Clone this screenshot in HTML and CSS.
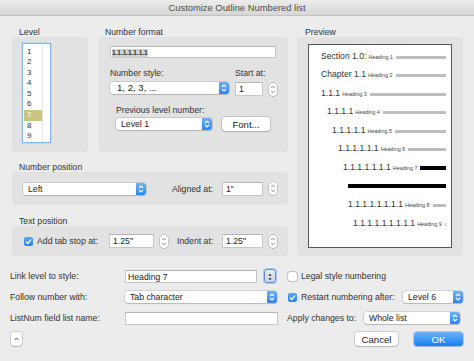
FILE: index.html
```html
<!DOCTYPE html>
<html>
<head>
<meta charset="utf-8">
<title>Customize Outline Numbered list</title>
<link rel="stylesheet" href="styles.css">
</head>
<body>
<div class="window">
  <div class="titlebar">Customize Outline Numbered list</div>

  <div class="top">
    <div class="left">
      <div class="pair">
        <div class="group">
          <div class="glabel">Level</div>
          <div class="box level-box">
            <div class="listbox">
              <ul class="items">
                <li>1</li><li>2</li><li>3</li><li>4</li><li>5</li><li>6</li><li class="sel">7</li><li>8</li><li>9</li>
              </ul>
            </div>
          </div>
        </div>

        <div class="group">
          <div class="glabel">Number format</div>
          <div class="box nf-box">
            <div class="field fmt-field"><span class="fmt-text">1.1.1.1.1.1.1</span></div>
            <div class="nf-row">
              <div class="style-col">
                <div class="flabel">Number style:</div>
                <div class="popup style-pop"><span class="ptext big">1, 2, 3, ...</span><span class="arrows"><svg width="10" height="12" viewBox="0 0 10 12"><path d="M3 5 L5 3 L7 5 M3 7 L5 9 L7 7" fill="none" stroke="#fff" stroke-width="1.2"/></svg></span></div>
              </div>
              <div class="start-col">
                <div class="flabel">Start at:</div>
                <div class="hstack">
                  <div class="field start-field">1</div>
                  <div class="stepper"><svg width="8" height="13" viewBox="0 0 8 13"><path d="M2.3 5 L4 3.3 L5.7 5 M2.3 8 L4 9.7 L5.7 8" fill="none" stroke="#7a7a7a" stroke-width="0.9"/></svg></div>
                </div>
              </div>
            </div>
            <div class="prev-block">
              <div class="flabel tight">Previous level number:</div>
              <div class="prev-row">
                <div class="popup prev-pop"><span class="ptext">Level 1</span><span class="arrows"><svg width="10" height="12" viewBox="0 0 10 12"><path d="M3 5 L5 3 L7 5 M3 7 L5 9 L7 7" fill="none" stroke="#fff" stroke-width="1.2"/></svg></span></div>
                <div class="btn font-btn">Font...</div>
              </div>
            </div>
          </div>
        </div>
      </div>

      <div class="group np-group">
        <div class="glabel">Number position</div>
        <div class="box np-box">
          <div class="popup np-pop"><span class="ptext">Left</span><span class="arrows"><svg width="10" height="12" viewBox="0 0 10 12"><path d="M3 5 L5 3 L7 5 M3 7 L5 9 L7 7" fill="none" stroke="#fff" stroke-width="1.2"/></svg></span></div>
          <div class="np-label">Aligned at:</div>
          <div class="field small-field">1"</div>
          <div class="stepper"><svg width="8" height="13" viewBox="0 0 8 13"><path d="M2.3 5 L4 3.3 L5.7 5 M2.3 8 L4 9.7 L5.7 8" fill="none" stroke="#7a7a7a" stroke-width="0.9"/></svg></div>
        </div>
      </div>

      <div class="group tp-group">
        <div class="glabel">Text position</div>
        <div class="box tp-box">
          <span class="check on"><svg width="9" height="9" viewBox="0 0 9 9"><path d="M2 4.6 L3.8 6.4 L7 2.6" fill="none" stroke="#fff" stroke-width="1.4"/></svg></span>
          <span class="tp-label1">Add tab stop at:</span>
          <div class="field tab-field">1.25"</div>
          <div class="stepper"><svg width="8" height="13" viewBox="0 0 8 13"><path d="M2.3 5 L4 3.3 L5.7 5 M2.3 8 L4 9.7 L5.7 8" fill="none" stroke="#7a7a7a" stroke-width="0.9"/></svg></div>
          <span class="tp-label2">Indent at:</span>
          <div class="field small-field">1.25"</div>
          <div class="stepper"><svg width="8" height="13" viewBox="0 0 8 13"><path d="M2.3 5 L4 3.3 L5.7 5 M2.3 8 L4 9.7 L5.7 8" fill="none" stroke="#7a7a7a" stroke-width="0.9"/></svg></div>
        </div>
      </div>
    </div>

    <div class="group preview">
      <div class="glabel pv-label">Preview</div>
      <div class="box pv-box">
        <div class="paper">
          <div class="prow i1"><span class="pnum">Section 1.0:</span><span class="phead">Heading 1</span><span class="pbar"></span></div>
          <div class="prow i1"><span class="pnum">Chapter 1.1</span><span class="phead">Heading 2</span><span class="pbar"></span></div>
          <div class="prow i1"><span class="pnum">1.1.1</span><span class="phead">Heading 3</span><span class="pbar"></span></div>
          <div class="prow i4"><span class="pnum">1.1.1.1</span><span class="phead">Heading 4</span><span class="pbar"></span></div>
          <div class="prow i5"><span class="pnum">1.1.1.1.1</span><span class="phead">Heading 5</span><span class="pbar"></span></div>
          <div class="prow i6"><span class="pnum">1.1.1.1.1.1</span><span class="phead">Heading 6</span><span class="pbar"></span></div>
          <div class="prow i7"><span class="pnum">1.1.1.1.1.1.1</span><span class="phead">Heading 7</span><span class="pbar dark"></span></div>
          <div class="prow i8 barrow"><span class="bigbar"></span></div>
          <div class="prow i8"><span class="pnum">1.1.1.1.1.1.1.1</span><span class="phead">Heading 8</span><span class="pbar"></span></div>
          <div class="prow i9"><span class="pnum">1.1.1.1.1.1.1.1.1</span><span class="phead">Heading 9</span><span class="pbar"></span></div>
        </div>
      </div>
    </div>
  </div>

  <div class="bottom">
    <div class="brow">
      <span class="blabel">Link level to style:</span>
      <div class="field link-field">Heading 7</div>
      <div class="link-stepper"><svg width="12" height="14" viewBox="0 0 12 14"><path d="M6 3 L8 5.6 L4 5.6 Z M6 11 L8 8.4 L4 8.4 Z" fill="#1f2a3a"/></svg></div>
      <span class="check off legal-check"></span>
      <span class="clabel">Legal style numbering</span>
    </div>
    <div class="brow">
      <span class="blabel">Follow number with:</span>
      <div class="popup follow-pop"><span class="ptext">Tab character</span><span class="arrows"><svg width="10" height="12" viewBox="0 0 10 12"><path d="M3 5 L5 3 L7 5 M3 7 L5 9 L7 7" fill="none" stroke="#fff" stroke-width="1.2"/></svg></span></div>
      <span class="check on restart-check"><svg width="9" height="9" viewBox="0 0 9 9"><path d="M2 4.6 L3.8 6.4 L7 2.6" fill="none" stroke="#fff" stroke-width="1.4"/></svg></span>
      <span class="clabel">Restart numbering after:</span>
      <div class="popup level6-pop"><span class="ptext">Level 6</span><span class="arrows"><svg width="10" height="12" viewBox="0 0 10 12"><path d="M3 5 L5 3 L7 5 M3 7 L5 9 L7 7" fill="none" stroke="#fff" stroke-width="1.2"/></svg></span></div>
    </div>
    <div class="brow">
      <span class="blabel">ListNum field list name:</span>
      <div class="field listnum-field"></div>
      <span class="apply-label">Apply changes to:</span>
      <div class="popup apply-pop"><span class="ptext">Whole list</span><span class="arrows"><svg width="10" height="12" viewBox="0 0 10 12"><path d="M3 5 L5 3 L7 5 M3 7 L5 9 L7 7" fill="none" stroke="#fff" stroke-width="1.2"/></svg></span></div>
    </div>
    <div class="brow">
      <div class="btn disclosure"><svg width="11" height="14" viewBox="0 0 11 14"><path d="M3.8 7.8 L5.5 6 L7.2 7.8" fill="none" stroke="#333" stroke-width="1"/></svg></div>
      <div class="btn cancel">Cancel</div>
      <div class="btn ok">OK</div>
    </div>
  </div>
</div>
</body>
</html>
```

FILE: styles.css
```css
* { box-sizing: border-box; }
html, body { margin: 0; padding: 0; }
body {
  width: 474px;
  height: 361px;
  overflow: hidden;
  background: #ececec;
  font-family: "Liberation Sans", Arial, sans-serif;
  font-size: 8.7px;
  color: #333;
}
.window { width: 474px; height: 361px; }

.titlebar {
  height: 16px;
  background: linear-gradient(#ececec, #d6d6d6);
  border-bottom: 1px solid #c2c2c2;
  text-align: center;
  font-size: 9.4px;
  line-height: 15px;
  color: #4d4d4d;
}

.top {
  display: flex;
  gap: 9px;
  margin: 11px 11px 0 12px;
}
.left { width: 276px; display: flex; flex-direction: column; }
.pair { display: flex; gap: 10px; }

.glabel { height: 10px; line-height: 10px; padding-left: 7px; }
.box { background: #e2e2e2; border-radius: 4px; }

/* Level */
.level-box { width: 76px; height: 115px; padding: 6px 0 0 10px; }
.listbox {
  width: 29px;
  height: 100px;
  background: #fff;
  border: 1px solid #86b4ee;
  box-shadow: 0 0 0 1px #c3d9f6;
}
.items {
  list-style: none;
  margin: 0;
  padding: 2.5px 0 0 0;
  margin-left: 1px;
  width: 19px;
  height: 100%;
  border-right: 1px solid #e6e6e6;
}
.items li { height: 10.6px; line-height: 10.6px; font-size: 8px; padding-left: 3px; }
.items li.sel { background: #c9c57f; color: #fff; }

/* Number format */
.nf-box { width: 190px; height: 115px; padding: 9px 12px 0 12px; }
.field {
  background: #fff;
  border: 1px solid #c6c6c6;
  border-top-color: #b4b4b4;
  padding-left: 3px;
  line-height: 12px;
  color: #222;
}
.fmt-field { width: 166px; height: 12px; padding: 1px 0 0 1px; line-height: 9px; }
.fmt-text {
  display: inline-block;
  background: #d2d2d2;
  font-size: 6.4px;
  line-height: 8px;
  color: #333;
  font-weight: bold;
}
.nf-row { display: flex; gap: 6px; margin-top: 10px; }
.flabel { height: 10px; line-height: 10px; margin-bottom: 4px; }
.flabel.tight { margin-bottom: 2px; }
.style-col { width: 119px; }
.hstack { display: flex; gap: 6px; align-items: center; }
.start-field { width: 28px; height: 14px; }

.popup {
  display: flex;
  align-items: center;
  height: 12px;
  background: #fff;
  border-radius: 3px;
  box-shadow: 0 0 0 0.5px rgba(0,0,0,0.22), 0 1px 1px rgba(0,0,0,0.12);
  padding-left: 5px;
  color: #222;
}
.ptext { line-height: 12px; }
.ptext.big { font-size: 9.6px; padding-left: 2px; }
.arrows {
  margin-left: auto;
  width: 10px;
  height: 12px;
  border-radius: 0 3px 3px 0;
  background: linear-gradient(#6db2fb, #2d84f4);
  display: flex;
}
.style-pop { width: 119px; }

.stepper {
  width: 8px;
  height: 13px;
  background: #fff;
  border-radius: 4px;
  box-shadow: 0 0 0 0.5px rgba(0,0,0,0.25), 0 1px 1px rgba(0,0,0,0.08);
  display: flex;
  flex: none;
}

.prev-block { margin-top: 9px; padding-left: 6px; }
.prev-row { display: flex; align-items: center; gap: 10px; height: 14px; }
.prev-pop { width: 96px; }
.btn {
  display: flex;
  align-items: center;
  justify-content: center;
  background: #fff;
  border-radius: 3px;
  box-shadow: 0 0 0 0.5px rgba(0,0,0,0.25), 0 1px 1px rgba(0,0,0,0.12);
  color: #222;
  height: 14px;
}
.font-btn { width: 48px; font-size: 9.6px; }

/* Number position */
.np-group { margin-top: 10px; }
.np-box {
  height: 33px;
  display: flex;
  align-items: center;
  padding: 0 11px 0 11px;
}
.np-pop { width: 123px; }
.np-label { flex: 1; text-align: right; padding-right: 9px; }
.small-field { width: 41px; height: 14px; margin-right: 6px; }

/* Text position */
.tp-group { margin-top: 11px; }
.tp-box {
  height: 30px;
  display: flex;
  align-items: center;
  padding: 0 11px 0 12px;
}
.check {
  width: 9px;
  height: 9px;
  border-radius: 2px;
  flex: none;
  display: flex;
}
.check.on { background: linear-gradient(#58a2f8, #2b83f3); }
.check.off { background: #fff; box-shadow: 0 0 0 0.5px rgba(0,0,0,0.35); }
.tp-label1 { width: 72px; margin-left: 4px; }
.tab-field { width: 45px; height: 14px; margin-right: 6px; }
.tp-label2 { width: 45px; margin-left: 9px; }

/* Preview */
.preview { width: 166px; }
.pv-label { padding-left: 8px; }
.pv-box { height: 219px; padding: 7px 11px 0 11px; }
.paper {
  width: 144px;
  height: 204px;
  background: #fff;
  border: 1px solid #555;
  padding: 1.5px 5px 0 0;
}
.prow {
  display: flex;
  align-items: baseline;
  height: 18.6px;
  line-height: 18.6px;
  white-space: nowrap;
}
.pnum { font-size: 8.6px; color: #333; }
.phead { font-size: 5.4px; color: #444; margin-left: 2px; }
.pbar { flex: 1; min-width: 1px; height: 3px; background: #bdbdbd; margin-left: 3px; }
.pbar.dark { background: #000; height: 4px; }
.barrow { align-items: center; }
.bigbar { flex: 1; height: 4px; background: #000; }
.i1 { padding-left: 12px; }
.i4 { padding-left: 18px; }
.i5 { padding-left: 23px; }
.i6 { padding-left: 29px; }
.i7 { padding-left: 34px; }
.i8 { padding-left: 39px; }
.i9 { padding-left: 44px; }

/* Bottom */
.bottom { margin-top: 9.5px; padding: 0 11px 0 10px; }
.brow { display: flex; align-items: center; height: 21px; }
.blabel { width: 115px; flex: none; }
.link-field { width: 132px; height: 13px; padding-left: 2px; }
.link-stepper {
  width: 12px;
  height: 14px;
  margin-left: 7px;
  border-radius: 3px;
  background: linear-gradient(#e6ecf4, #c9d5e6);
  border: 1px solid #5e8fd0;
  box-shadow: 0 0 0 1px #a9c7ef;
  display: flex;
}
.legal-check { margin-left: 12px; }
.clabel { margin-left: 4px; }
.follow-pop { width: 152px; }
.restart-check { margin-left: 11px; }
.level6-pop { width: 60px; margin-left: auto; }
.listnum-field { width: 153px; height: 13px; }
.apply-label { margin-left: 9px; }
.apply-pop { width: 96px; margin-left: auto; margin-right: 3px; }
.disclosure { width: 11px; margin-left: 1px; }
.cancel { width: 43px; margin-left: auto; font-size: 9.6px; }
.ok {
  width: 49px;
  margin-left: 16px;
  font-size: 9.6px;
  color: #fff;
  background: linear-gradient(#6ab3fb, #1a80f4);
  box-shadow: 0 0 0 0.5px rgba(0,60,160,0.4), 0 1px 1px rgba(0,0,0,0.12);
}
```
